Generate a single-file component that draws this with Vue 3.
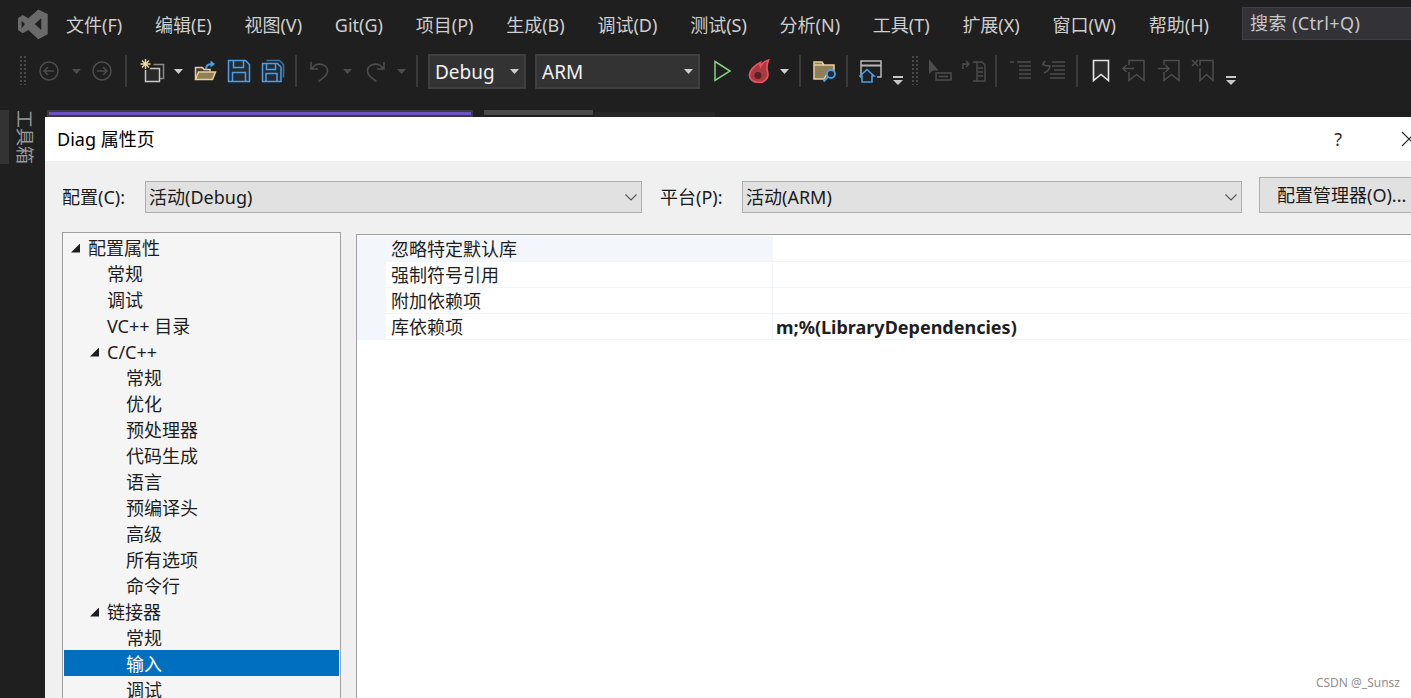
<template>
  <div class="ide">
    <!-- menu bar -->
    <div class="menubar">
      <svg class="logo" viewBox="0 0 24 24" width="31" height="31">
        <path fill="#6a6a6a" fill-rule="evenodd" d="M15.700.3 23 3.900v15.700l-7.300 3.900L8 16.300l-4.400 2.500L0 16.300V7.200l3.600-2.600L8 7.200zM2.800 9v6l2.600-3.400zM13 11.600l5 4.700V7.200z" />
      </svg>
      <span v-for="m in menus" :key="m" class="menu-item">{{ m }}</span>
      <div class="search">搜索 (Ctrl+Q)</div>
    </div>

    <!-- toolbar -->
    <div class="toolbar">
      <span class="grip"></span>
      <svg class="ic22 ml11" viewBox="0 0 22 22"><circle cx="11" cy="11" r="9" fill="none" stroke="#4d4d4d" stroke-width="1.5" /><path d="M16 11H6.500M10 7l-4 4 4 4" fill="none" stroke="#4d4d4d" stroke-width="1.5" /></svg>
      <span class="caret off ml12"></span>
      <svg class="ic22 ml10" viewBox="0 0 22 22"><circle cx="11" cy="11" r="9" fill="none" stroke="#4d4d4d" stroke-width="1.5" /><path d="M6 11h9.500M12 7l4 4-4 4" fill="none" stroke="#4d4d4d" stroke-width="1.5" /></svg>
      <span class="sep ml12"></span>

      <svg class="ic26 ml13" viewBox="0 0 26 26">
        <path d="M13.500 6.500h10v14h-4" fill="none" stroke="#8a8a8a" stroke-width="1.5" />
        <path d="M10 10.500h9.500v13H5.500V12" fill="#2a2a2a" stroke="#c8c8c8" stroke-width="1.5" />
        <path d="M5.500 1v10M.5 6h10M2 2.500l7 7M9 2.500l-7 7" stroke="#f0d9a0" stroke-width="1.400" fill="none" />
      </svg>
      <span class="caret ml8"></span>
      <svg class="ic ml10" viewBox="0 0 24 24">
        <path d="M2.500 20.500V8.500h7l1.500 2h6v2" fill="#4a4030" stroke="#e8cf98" stroke-width="1.500" />
        <path d="M2.500 20.500l3-7.500h17l-3 7.500z" fill="#8f7f58" stroke="#e8cf98" stroke-width="1.500" />
        <path d="M13 10c0-3.500 2-5 6-5" fill="none" stroke="#4a9fe8" stroke-width="2" />
        <path d="M17.500 1.500 22 5l-4.500 3.500z" fill="#4a9fe8" />
      </svg>
      <svg class="ic ml10" viewBox="0 0 24 24">
        <path d="M1.500 1.500h17l4 4v17h-21z" fill="#262b33" stroke="#4a9fe8" stroke-width="1.500" />
        <path d="M6.500 1.500v7h10v-7M5.500 22.500v-9h13v9" fill="none" stroke="#4a9fe8" stroke-width="1.500" />
      </svg>
      <svg class="ic ml10" viewBox="0 0 24 24">
        <path d="M5.500 1.500h13l4 4v13" fill="none" stroke="#3576ae" stroke-width="1.500" />
        <path d="M1.500 4.500h15l3.500 3.500v14.500H1.500z" fill="#262b33" stroke="#4a9fe8" stroke-width="1.500" />
        <path d="M5.500 4.500v6h9v-6M5 22.500v-8h11v8" fill="none" stroke="#4a9fe8" stroke-width="1.500" />
      </svg>
      <span class="sep ml10"></span>

      <svg class="ic ml11" viewBox="0 0 24 24"><path d="M3 3v7h7M3.500 9.500l4-3.500c4-2 12-.500 12 6 0 4-3 6-9 10.500" fill="none" stroke="#4d4d4d" stroke-width="1.600" /></svg>
      <span class="caret off ml11"></span>
      <svg class="ic ml11" viewBox="0 0 24 24"><path d="M21 3v7h-7M20.500 9.500l-4-3.500c-4-2-12-.500-12 6 0 4 3 6 9 10.500" fill="none" stroke="#4d4d4d" stroke-width="1.600" /></svg>
      <span class="caret off ml10"></span>
      <span class="sep ml10"></span>

      <div class="combo debug ml10"><span>Debug</span><span class="caret"></span></div>
      <div class="combo arm ml9"><span>ARM</span><span class="caret"></span></div>
      <svg class="ic ml10" viewBox="0 0 24 24"><path d="M5 2.500 20 12 5 21.500z" fill="none" stroke="#89d185" stroke-width="1.500" /></svg>
      <svg class="ic ml14" viewBox="0 0 24 24">
        <path d="M20.500 1C17 2 14 4 12.500 7.500 12 6 12 5 12.500 3.500 7 6 1.500 11 1.500 16.500c0 4 4.500 7 9 7 5.500 0 9.500-3.500 9.500-8 0-3.500-3-5.500.5-14.500z" fill="#a83a42" stroke="#e8505c" stroke-width="1.800" />
        <circle cx="10" cy="16.500" r="3.500" fill="#5a2026" />
      </svg>
      <span class="caret ml8"></span>
      <span class="sep ml10"></span>

      <svg class="ic ml12" viewBox="0 0 24 24">
        <path d="M1 3h8l2 3h10v8h-6l-4 6H1z" fill="#8f7f58" stroke="#e8cf98" stroke-width="1.500" />
        <path d="M1 6h10" stroke="#e8cf98" stroke-width="1.500" />
        <circle cx="18" cy="15" r="4" fill="#262b33" stroke="#4a9fe8" stroke-width="1.800" />
        <path d="M15 18l-4.500 4.500" stroke="#4a9fe8" stroke-width="2" />
      </svg>
      <span class="sep ml9"></span>
      <svg class="ic ml11" viewBox="0 0 24 24">
        <path d="M6 18H2V2h20v16h-4" fill="none" stroke="#b8b8b8" stroke-width="1.500" />
        <path d="M2 6.500h20" stroke="#b8b8b8" stroke-width="2" />
        <path d="M1 17l7-6.500 7 6.500h-2v6H3v-6z" fill="#1f1f1f" stroke="#4a9fe8" stroke-width="1.600" />
      </svg>
      <span class="overflow ml10"></span>
      <span class="grip ml8"></span>

      <svg class="ic ml9" viewBox="0 0 24 24">
        <path d="M1 0v15l3.500-3.500h6z" fill="#4d4d4d" />
        <path d="M8 14h15v7H8z" fill="none" stroke="#4d4d4d" stroke-width="1.500" />
        <path d="M11 17.500h9" stroke="#4d4d4d" stroke-width="1.500" />
      </svg>
      <svg class="ic ml10" viewBox="0 0 24 24">
        <path d="M1 10V5h6M4 2 7 5 4 8M11 3h4v19h-4M14 3h6l3 3v16h-9M16 9h5M16 13h5M16 17h5" fill="none" stroke="#4d4d4d" stroke-width="1.400" />
      </svg>
      <span class="sep ml9"></span>

      <svg class="ic ml12" viewBox="0 0 24 24"><path d="M1 3h4M8 3h14M10 7h12M10 11h12M10 15h12M10 19h12" stroke="#4d4d4d" stroke-width="1.500" /></svg>
      <svg class="ic ml9" viewBox="0 0 24 24"><path d="M3 2 .8 5.500 5 7h3c0 3-3 6-6 7M10 3h13M10 7h13M12 11h11M8 15h15M8 19h15" fill="none" stroke="#4d4d4d" stroke-width="1.500" /></svg>
      <span class="sep ml10"></span>

      <svg class="ic ml11" viewBox="0 0 24 24"><path d="M4.500 1.500h15v20L12 15.500l-7.500 6z" fill="#2d2d2d" stroke="#e6e6e6" stroke-width="1.600" /></svg>
      <svg class="ic ml9" viewBox="0 0 24 24"><path d="M7 6V1.500h15v20L14.500 15.500 7 21.500V13M12 9.500H1M4.500 6 1 9.500 4.500 13" fill="none" stroke="#4d4d4d" stroke-width="1.500" /></svg>
      <svg class="ic ml11" viewBox="0 0 24 24"><path d="M7 6V1.500h15v20L14.500 15.500 7 21.500V13M1 9.500h11M8.500 6l3.500 3.500L8.500 13" fill="none" stroke="#4d4d4d" stroke-width="1.500" /></svg>
      <svg class="ic ml10" viewBox="0 0 24 24"><path d="M9 6.500V1.500h13v20L15.500 15.500 9 21.500V9.500M1 1l6 6M7 1 1 7" fill="none" stroke="#4d4d4d" stroke-width="1.500" /></svg>
      <span class="overflow ml11"></span>
    </div>

    <div class="workspace">
      <!-- toolbox tab on the left edge -->
      <div class="side">
        <span class="side-tab"></span>
        <span class="side-text">工具箱</span>
      </div>

      <div class="center">
        <div class="tabs">
          <span class="tab-active"></span>
          <span class="tab-gray"></span>
          <span class="tab-dark"></span>
        </div>

        <div class="dialog">
          <div class="titlebar">
            <span class="title">Diag 属性页</span>
            <span class="help">?</span>
            <svg class="close" viewBox="0 0 16 16" width="16" height="16"><path d="M1 1l14 14M15 1 1 15" stroke="#222" stroke-width="1.100" fill="none" /></svg>
          </div>

          <div class="dialog-body">
            <div class="config-row">
              <label class="lbl lbl-c">配置(C):</label>
              <div class="select sel-c">
                <span>活动(Debug)</span>
                <svg viewBox="0 0 12 7" width="12" height="7"><path d="M.5.500 6 6l5.500-5.500" fill="none" stroke="#555" stroke-width="1.100" /></svg>
              </div>
              <label class="lbl lbl-p">平台(P):</label>
              <div class="select sel-p">
                <span>活动(ARM)</span>
                <svg viewBox="0 0 12 7" width="12" height="7"><path d="M.5.500 6 6l5.500-5.500" fill="none" stroke="#555" stroke-width="1.100" /></svg>
              </div>
              <button class="mgr">配置管理器(O)...</button>
            </div>

            <div class="panels">
              <div class="tree">
                <div
                  v-for="(row, i) in tree"
                  :key="i"
                  class="tree-row"
                  :class="[`lv${row.lv}`, { open: row.open, selected: row.sel }]"
                >
                  <span v-if="row.open" class="arrow"></span>
                  <span>{{ row.t }}</span>
                </div>
              </div>

              <div class="grid">
                <div v-for="(p, i) in props" :key="p.name" class="grid-row" :class="{ first: i === 0 }">
                  <div class="gutter"></div>
                  <div class="name">{{ p.name }}</div>
                  <div class="value">{{ p.value }}</div>
                </div>
              </div>
            </div>
          </div>
        </div>
      </div>
    </div>

    <span class="watermark">CSDN @_Sunsz</span>
  </div>
</template>

<script setup>
const menus = [
  '文件(F)', '编辑(E)', '视图(V)', 'Git(G)', '项目(P)', '生成(B)', '调试(D)',
  '测试(S)', '分析(N)', '工具(T)', '扩展(X)', '窗口(W)', '帮助(H)',
]

const tree = [
  { t: '配置属性', lv: 0, open: true },
  { t: '常规', lv: 1 },
  { t: '调试', lv: 1 },
  { t: 'VC++ 目录', lv: 1 },
  { t: 'C/C++', lv: 1, open: true },
  { t: '常规', lv: 2 },
  { t: '优化', lv: 2 },
  { t: '预处理器', lv: 2 },
  { t: '代码生成', lv: 2 },
  { t: '语言', lv: 2 },
  { t: '预编译头', lv: 2 },
  { t: '高级', lv: 2 },
  { t: '所有选项', lv: 2 },
  { t: '命令行', lv: 2 },
  { t: '链接器', lv: 1, open: true },
  { t: '常规', lv: 2 },
  { t: '输入', lv: 2, sel: true },
  { t: '调试', lv: 2 },
]

const props = [
  { name: '忽略特定默认库', value: '' },
  { name: '强制符号引用', value: '' },
  { name: '附加依赖项', value: '' },
  { name: '库依赖项', value: 'm;%(LibraryDependencies)' },
]
</script>

<style>
html, body {
  margin: 0;
  background: #1f1f1f;
  overflow: hidden;
}
</style>

<style scoped>
.ide {
  position: relative;
  width: 1411px;
  height: 698px;
  overflow: hidden;
  display: flex;
  flex-direction: column;
  background: #1f1f1f;
  font-family: "Noto Sans", "Noto Sans CJK SC", sans-serif;
  font-size: 18px;
  line-height: 26px;
}

/* menu */
.menubar {
  height: 48px;
  display: flex;
  align-items: center;
  padding-left: 18px;
  color: #cfcfcf;
  flex: none;
}
.logo { flex: none; margin-right: 17px; }
.menu-item { margin-right: 32.750px; white-space: nowrap; padding-top: 2px; }
.search {
  position: absolute;
  left: 1242px;
  top: 7px;
  width: 180px;
  height: 33px;
  box-sizing: border-box;
  background: #333337;
  border: 1px solid #3f3f46;
  padding-left: 7px;
  line-height: 30px;
  color: #c8c8c8;
  white-space: nowrap;
  letter-spacing: .4px;
}

/* toolbar */
.toolbar {
  height: 62px;
  flex: none;
  box-sizing: border-box;
  padding: 6px 0 0 19px;
  display: flex;
  align-items: flex-start;
}
.toolbar > * { flex: none; align-self: flex-start; margin-top: 5px; }
.toolbar > .combo { margin-top: 0; }
.ic { width: 24px; height: 24px; }
.ic22 { width: 22px; height: 22px; margin-top: 6px !important; }
.ic26 { width: 26px; height: 26px; margin-top: 4px !important; }
.ml8 { margin-left: 8px; }
.ml9 { margin-left: 9px; }
.ml10 { margin-left: 10px; }
.ml11 { margin-left: 11px; }
.ml12 { margin-left: 12px; }
.ml13 { margin-left: 13px; }
.ml14 { margin-left: 14px; }
.grip {
  width: 8px;
  height: 30px;
  background-image: radial-gradient(circle, #4a4a4a 1px, transparent 1.200px);
  background-size: 4px 4px;
  margin-top: 1px !important;
}
.sep {
  width: 2px;
  height: 32px;
  background: #3a3a3a;
  margin-top: 1px !important;
}
.caret {
  width: 9px;
  height: 5px;
  background: #cfcfcf;
  clip-path: polygon(0 0, 100% 0, 50% 100%);
}
.caret.off { background: #4d4d4d; }
.toolbar > .caret { margin-top: 15px; }
.overflow {
  width: 10px;
  height: 10px;
  margin-top: 22px !important;
  border-top: 2px solid #c8c8c8;
  box-sizing: border-box;
  position: relative;
}
.overflow::after {
  content: "";
  position: absolute;
  left: 0;
  top: 2px;
  border-left: 5px solid transparent;
  border-right: 5px solid transparent;
  border-top: 5px solid #c8c8c8;
}
.combo {
  height: 35px;
  box-sizing: border-box;
  background: #333333;
  border: 2px solid #3f3f3f;
  display: flex;
  align-items: center;
  justify-content: space-between;
  padding: 0 5px 0 5px;
  color: #f1f1f1;
  font-size: 19px;
}
.debug { width: 98px; }
.arm { width: 165px; }

/* workspace */
.workspace {
  flex: 1;
  display: flex;
  min-height: 0;
}
.side {
  width: 45px;
  flex: none;
  display: flex;
  align-items: flex-start;
}
.side-tab {
  width: 9px;
  height: 54px;
  background: #333333;
}
.side-text {
  margin-left: 8px;
  writing-mode: vertical-rl;
  text-orientation: sideways;
  line-height: 16px;
  color: #9a9a9a;
  white-space: nowrap;
}
.center {
  flex: none;
  width: 1400px;
  display: flex;
  flex-direction: column;
}
.tabs {
  height: 7px;
  flex: none;
  display: flex;
  align-items: flex-start;
  padding-left: 2px;
}
.tab-active {
  width: 422px;
  height: 3px;
  background: #6a52c8;
  border: solid #3c3c3c;
  border-width: 2px 2px 2px 2px;
}
.tab-gray {
  width: 109px;
  height: 5px;
  margin-left: 11px;
  background: #4a4a4a;
}
.tab-dark {
  width: 120px;
  height: 5px;
  margin-top: 2px;
  margin-left: 2px;
  background: #262626;
}

/* dialog */
.dialog {
  flex: 1;
  min-height: 0;
  display: flex;
  flex-direction: column;
  background: #f0f0f0;
}
.titlebar {
  height: 44px;
  flex: none;
  background: #fff;
  display: flex;
  align-items: center;
  padding-left: 12px;
  color: #000;
}
.title { white-space: nowrap; }
.help { margin-left: auto; color: #333; }
.close { margin-left: 59px; margin-right: 28px; flex: none; }
.dialog-body {
  flex: 1;
  min-height: 0;
  display: flex;
  flex-direction: column;
  padding: 16px 17px 0;
}
.config-row {
  display: flex;
  align-items: flex-end;
  color: #1a1a1a;
  flex: none;
}
.lbl { line-height: 32px; white-space: nowrap; flex: none; }
.lbl-c { width: 83px; }
.lbl-p { width: 82px; margin-left: 18px; }
.select {
  flex: none;
  height: 32px;
  box-sizing: border-box;
  background: #e1e1e1;
  border: 1px solid #adadad;
  display: flex;
  align-items: center;
  justify-content: space-between;
  padding: 0 4px 0 3px;
  white-space: nowrap;
}
.sel-c { width: 497px; }
.sel-p { width: 500px; }
.mgr {
  flex: none;
  width: 160px;
  height: 36px;
  margin-left: 17px;
  box-sizing: border-box;
  background: #e1e1e1;
  border: 1px solid #adadad;
  font: inherit;
  color: #1a1a1a;
  padding: 0 0 0 17px;
  text-align: left;
  white-space: nowrap;
}
.panels {
  flex: 1;
  min-height: 0;
  display: flex;
  align-items: stretch;
  margin-top: 19px;
}

/* tree */
.tree {
  width: 279px;
  flex: none;
  box-sizing: border-box;
  background: #f5f5f5;
  border: 1px solid #a0a0a0;
  border-bottom: none;
  padding: 1px 1px 0;
  color: #1e1e1e;
}
.tree-row {
  height: 26px;
  box-sizing: border-box;
  padding-top: 2px;
  display: flex;
  align-items: center;
  white-space: nowrap;
}
.tree-row.lv0 { padding-left: 7px; }
.tree-row.lv1 { padding-left: 43px; }
.tree-row.lv2 { padding-left: 62px; }
.tree-row.lv1.open { padding-left: 26px; }
.arrow {
  width: 9px;
  height: 9px;
  margin-right: 8px;
  background: #1e1e1e;
  clip-path: polygon(100% 0, 100% 100%, 0 100%);
}
.selected { background: #006fc0; color: #fff; }

/* property grid */
.grid {
  flex: none;
  width: 1062px;
  margin-left: 15px;
  margin-top: 2px;
  padding-top: 1px;
  box-sizing: border-box;
  background: #fff;
  border: 1px solid #a0a0a0;
  border-bottom: none;
  color: #1e1e1e;
}
.grid-row {
  height: 26px;
  box-sizing: border-box;
  display: flex;
  border-bottom: 1px solid #f2f5fb;
}
.gutter { width: 29px; flex: none; background: #f3f6fb; }
.name {
  width: 387px;
  flex: none;
  box-sizing: border-box;
  padding-left: 5px;
  border-right: 1px solid #f2f5fb;
  white-space: nowrap;
}
.first .name { background: #f3f6fb; }
.value {
  flex: 1;
  padding-left: 3px;
  font-weight: 700;
  white-space: nowrap;
}

.watermark {
  position: absolute;
  right: 11px;
  bottom: 8px;
  font-size: 12px;
  line-height: 14px;
  color: #8f8f8f;
}
</style>
